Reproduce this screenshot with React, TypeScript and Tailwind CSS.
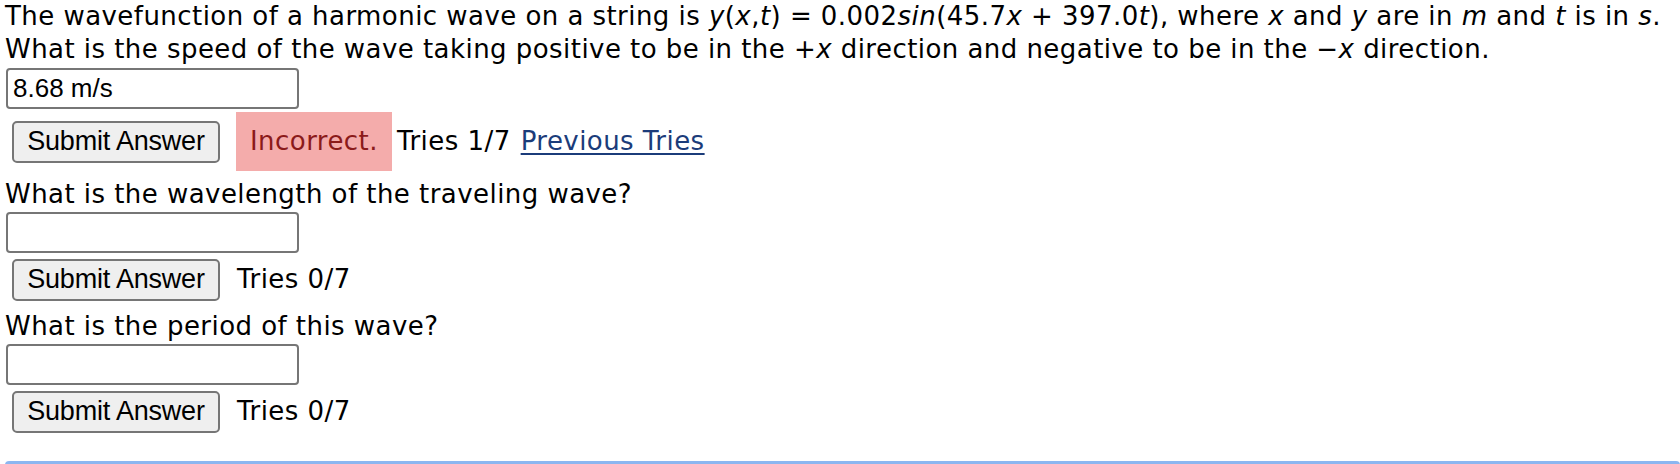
const verdana = "font-['DejaVu_Sans',Verdana,sans-serif]";
const arial = "font-['Liberation_Sans',Arial,sans-serif]";

const AnswerInput = ({ value = '' }: { value?: string }) => (
  <input
    type="text"
    defaultValue={value}
    className={`${arial} block h-[41px] w-[293px] ml-[6px] rounded-[4px] border-2 border-[#767676] bg-white px-[5px] text-[26px] tracking-normal text-black outline-none`}
  />
);

const SubmitButton = () => (
  <button
    type="button"
    className={`${arial} h-[42px] w-[208px] rounded-[5px] border-2 border-[#767676] bg-[#efefef] text-[27px] tracking-[-0.2px] text-black`}
  >
    Submit Answer
  </button>
);

const SubmitRow = ({ tries, incorrect = false }: { tries: string; incorrect?: boolean }) => (
  <div className="mt-[3px] mb-[7px] flex min-h-[47px] items-center pl-[12px]">
    <SubmitButton />
    <div className="ml-[17px] flex items-center">
      {incorrect && (
        <span className="-ml-[1px] mr-[5px] flex h-[59px] items-center bg-[#f4acab] px-[14px] text-[#8b1a1a]">
          Incorrect.
        </span>
      )}
      <span>Tries {tries}</span>
      {incorrect && (
        <a href="#" className="ml-[10px] text-[#1b3c7a] underline underline-offset-[3px]">
          Previous Tries
        </a>
      )}
    </div>
  </div>
);

export default function App() {
  return (
    <div
      className={`${verdana} h-[464px] overflow-hidden bg-white pl-[5px] text-[26px] leading-[33px] tracking-[0.45px] text-black`}
    >
      <p>
        The wavefunction of a harmonic wave on a string is <i>y</i>(<i>x</i>,<i>t</i>) = 0.002<i>sin</i>(45.7
        <i>x</i> + 397.0<i>t</i>), where <i>x</i> and <i>y</i> are in <i>m</i> and <i>t</i> is in <i>s</i>.
        <br />
        What is the speed of the wave taking positive to be in the +<i>x</i> direction and negative to be in
        the −<i>x</i> direction.
      </p>
      <div className="mt-[2px] -ml-[5px]">
        <AnswerInput value="8.68 m/s" />
      </div>
      <div className="-ml-[5px]">
        <SubmitRow tries="1/7" incorrect />
      </div>

      <p>What is the wavelength of the traveling wave?</p>
      <div className="mt-[1px] -ml-[5px]">
        <AnswerInput />
      </div>
      <div className="-ml-[5px]">
        <SubmitRow tries="0/7" />
      </div>

      <p>What is the period of this wave?</p>
      <div className="mt-[1px] -ml-[5px]">
        <AnswerInput />
      </div>
      <div className="-ml-[5px]">
        <SubmitRow tries="0/7" />
      </div>

      <div className="mt-[26px] h-[40px] rounded-t-[4px] border-x-2 border-t-[3px] border-[#8cb6f0] bg-[#f3f7fd]" />
    </div>
  );
}
